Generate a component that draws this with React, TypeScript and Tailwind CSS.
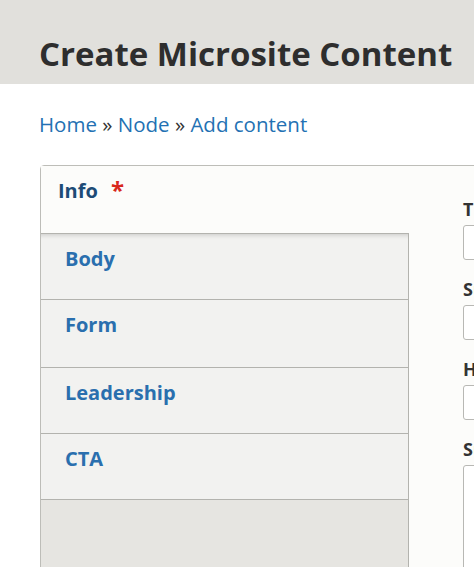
import React from "react";

const font = { fontFamily: '"Open Sans", "DejaVu Sans", sans-serif' };

const tabs = [
  { label: "Body", h: "h-[66px]", shadow: true },
  { label: "Form", h: "h-[68px]" },
  { label: "Leadership", h: "h-[66px]" },
  { label: "CTA", h: "h-[66px]" },
];

const fields = ["Title", "Subtitle", "Headline"];

export default function App() {
  return (
    <div
      className="w-[474px] h-[567px] overflow-hidden bg-white"
      style={font}
    >
      {/* Header */}
      <header className="bg-[#e1e0dc] h-[84px] pt-[34px] pl-[39px]">
        <h1 className="text-[33px] leading-[40px] font-bold text-[#2e2e2e] whitespace-nowrap">
          Create Microsite Content
        </h1>
      </header>

      {/* Breadcrumb */}
      <nav className="pt-[28px] pl-[39px] text-[20.5px] leading-[24px] text-[#2371b3] whitespace-nowrap">
        <a href="#">Home</a>
        <span className="text-[#333]"> » </span>
        <a href="#">Node</a>
        <span className="text-[#333]"> » </span>
        <a href="#">Add content</a>
      </nav>

      {/* Vertical tabs */}
      <div className="mt-[29px] ml-[40px] w-[700px] flex border border-[#bdbdb8] rounded-tl-[4px] bg-[#fcfcfa] h-[600px]">
        <ul className="w-[368px] shrink-0 flex flex-col">
          <li className="h-[68px] pt-[13px] pl-[17px] border-b border-[#b3b3ae] bg-[#fcfcfa] flex items-start">
            <span className="text-[20px] leading-[24px] font-bold text-[#1d4b76]">
              Info
            </span>
            <span className="ml-[13px] -mt-[1px] text-[24px] leading-[24px] font-bold text-[#d8281c]">
              *
            </span>
          </li>
          {tabs.map((t) => (
            <li
              key={t.label}
              className={`${t.h} pt-[13px] pl-[24px] border-b border-r border-[#b3b3ae] bg-[#f2f2f0] ${
                t.shadow ? "shadow-[inset_0_6px_5px_-5px_rgba(0,0,0,0.18)]" : ""
              }`}
            >
              <a
                href="#"
                className="text-[20px] leading-[24px] font-bold text-[#2a6fae]"
              >
                {t.label}
              </a>
            </li>
          ))}
          <li className="flex-1 bg-[#e6e5e1] border-r border-[#b3b3ae]" />
        </ul>

        {/* Pane */}
        <div className="flex-1 pt-[32px] pl-[54px]">
          {fields.map((f) => (
            <div key={f} className="mb-[18px]">
              <label className="block text-[18px] leading-[22px] font-bold text-[#333] whitespace-nowrap">
                {f}
              </label>
              <input
                type="text"
                className="mt-[5px] block w-[260px] h-[35px] border border-[#b8b8b4] rounded-[3px] bg-white"
              />
            </div>
          ))}
          <div>
            <label className="block text-[18px] leading-[22px] font-bold text-[#333] whitespace-nowrap">
              Summary
            </label>
            <textarea className="mt-[5px] block w-[260px] h-[160px] border border-[#b8b8b4] rounded-[3px] bg-white resize-none" />
          </div>
        </div>
      </div>
    </div>
  );
}
